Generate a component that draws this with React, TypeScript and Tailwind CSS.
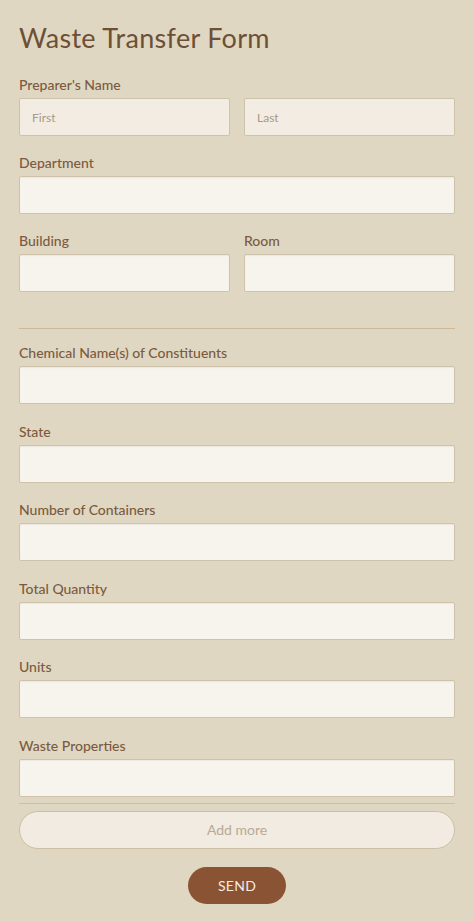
import React from "react";

const font = { fontFamily: "Lato, 'Open Sans', sans-serif" };

interface FieldProps {
  label: string;
  className?: string;
}

const Field = ({ label, className }: FieldProps) => (
  <div className={className}>
    <label className="block text-[14px] leading-5 font-medium text-[#7b5b40]">{label}</label>
    <input
      type="text"
      className="mt-[3px] block w-full h-[38px] bg-[#f7f4ee] border border-[#cfc2aa] rounded-[2px] shadow-[inset_0_1px_1px_rgba(120,100,70,0.08)] outline-none"
    />
  </div>
);

export default function App() {
  return (
    <div className="min-h-[922px] w-full bg-[#e0d7c2] px-[19px] pt-[22px] pb-5" style={font}>
      <h1 className="text-[27px] leading-8 text-[#6d4f36] tracking-[0.3px]">Waste Transfer Form</h1>

      {/* Name */}
      <div className="mt-[21px]">
        <label className="block text-[14px] leading-5 font-medium text-[#7b5b40]">Preparer's Name</label>
        <div className="mt-[3px] grid grid-cols-2 gap-[14px]">
          <input
            placeholder="First"
            className="h-[38px] w-full bg-[#f2ece2] border border-[#cfc2aa] rounded-[2px] px-3 text-[12px] placeholder:text-[#a8998a] outline-none"
          />
          <input
            placeholder="Last"
            className="h-[38px] w-full bg-[#f2ece2] border border-[#cfc2aa] rounded-[2px] px-3 text-[12px] placeholder:text-[#a8998a] outline-none"
          />
        </div>
      </div>

      <Field label="Department" className="mt-[17px]" />

      <div className="mt-[17px] grid grid-cols-2 gap-[14px]">
        <Field label="Building" />
        <Field label="Room" />
      </div>

      <div className="mt-[36px] border-t border-[#cdb99a]" />

      <Field label="Chemical Name(s) of Constituents" className="mt-[14px]" />
      <Field label="State" className="mt-[17.5px]" />
      <Field label="Number of Containers" className="mt-[17.5px]" />
      <Field label="Total Quantity" className="mt-[17.5px]" />
      <Field label="Units" className="mt-[17.5px]" />
      <Field label="Waste Properties" className="mt-[17.5px]" />

      <div className="mt-[6px] border-t border-[#cbbfa8]" />

      <button className="mt-[7px] w-full h-[38px] rounded-full bg-[#f1ebe1] border border-[#cdbfa6] text-[14px] text-[#b8aa94]">
        Add more
      </button>

      <div className="mt-[18px] flex justify-center">
        <button className="w-[98px] h-[37px] rounded-full bg-[#8a5434] text-[14px] text-[#f6ece1] tracking-[0.3px]">
          SEND
        </button>
      </div>
    </div>
  );
}
